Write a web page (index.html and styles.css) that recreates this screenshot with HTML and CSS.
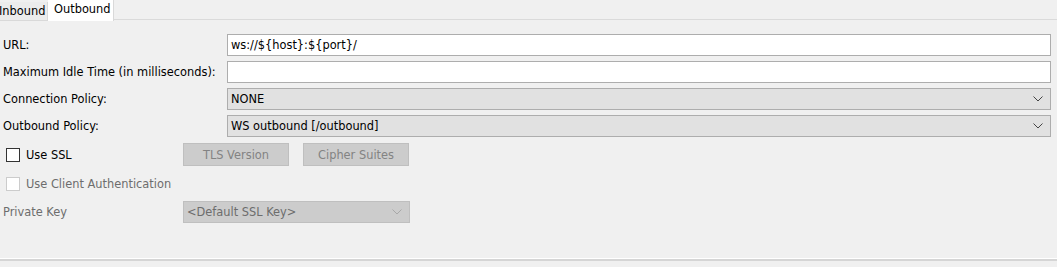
FILE: index.html
```html
<!DOCTYPE html>
<html>
<head>
<meta charset="utf-8">
<link rel="stylesheet" href="styles.css">
</head>
<body>
<div class="tabs">
  <div class="tab">Inbound</div>
  <div class="tab active">Outbound</div>
  <div class="tab-fill"></div>
</div>
<div class="panel">
  <div class="form">
    <label class="lbl">URL:</label>
    <div class="field">ws://${host}:${port}/</div>
    <label class="lbl">Maximum Idle Time (in milliseconds):</label>
    <div class="field"></div>
    <label class="lbl">Connection Policy:</label>
    <div class="combo"><span>NONE</span><svg class="chev" width="10" height="6" viewBox="0 0 10 6"><path d="M0.5 0.5 L5 5 L9.5 0.5" fill="none" stroke="#444" stroke-width="1"/></svg></div>
    <label class="lbl">Outbound Policy:</label>
    <div class="combo"><span>WS outbound [/outbound]</span><svg class="chev" width="10" height="6" viewBox="0 0 10 6"><path d="M0.5 0.5 L5 5 L9.5 0.5" fill="none" stroke="#444" stroke-width="1"/></svg></div>
  </div>
  <div class="ssl">
    <div class="check-row">
      <div class="check"><span class="box"></span><span>Use SSL</span></div>
      <div class="btns">
        <div class="btn">TLS Version</div>
        <div class="btn">Cipher Suites</div>
      </div>
    </div>
    <div class="check disabled"><span class="box"></span><span>Use Client Authentication</span></div>
    <div class="key-row">
      <span class="lbl disabled-text">Private Key</span>
      <div class="combo off"><span>&lt;Default SSL Key&gt;</span><svg class="chev" width="10" height="6" viewBox="0 0 10 6"><path d="M0.5 0.5 L5 5 L9.5 0.5" fill="none" stroke="#a8a8a8" stroke-width="1"/></svg></div>
    </div>
  </div>
</div>
<div class="footer"></div>
</body>
</html>
```

FILE: styles.css
```css
html, body {
  margin: 0;
  padding: 0;
  background: #f0f0f0;
  font-family: "DejaVu Sans", Verdana, sans-serif;
  font-size: 11.4px;
  color: #000;
  width: 1057px;
  height: 267px;
  overflow: hidden;
}
.tabs {
  display: flex;
  height: 21px;
  align-items: flex-end;
}
.tab {
  height: 19px;
  line-height: 19px;
  padding: 0 4px 0 0;
  margin-left: -1px;
  background: #ececec;
  border-right: 1px solid #d9d9d9;
  border-bottom: 1px solid #d9d9d9;
  box-sizing: border-box;
  width: 49px;
  overflow: hidden;
  white-space: nowrap;
  font-size: 11.4px;
}
.tab.active {
  height: 21px;
  width: 66px;
  margin-left: 0;
  background: #fff;
  border-bottom: none;
  border-right: 1px solid #d9d9d9;
  line-height: 18px;
  padding-left: 6px;
}
.tab-fill {
  flex: 1;
  height: 1px;
  margin-bottom: 1px;
  background: #dadada;
}
.panel {
  height: 237px;
}
.form {
  display: grid;
  grid-template-columns: 224px 1fr;
  grid-auto-rows: 22px;
  row-gap: 5px;
  padding: 13px 6px 0 3px;
  align-items: center;
}
.lbl {
  font-size: 11.4px;
  white-space: nowrap;
}
.field, .combo {
  height: 22px;
  box-sizing: border-box;
  border: 1px solid #adadad;
  background: #fff;
  padding: 0 3px;
  display: flex;
  align-items: center;
  font-size: 11.4px;
}
.combo {
  background: #e1e1e1;
  justify-content: space-between;
  padding-right: 7px;
}
.chev { flex: none; }
.ssl {
  padding: 6px 0 0 6px;
}
.check-row {
  display: flex;
  align-items: center;
  height: 23px;
}
.check {
  display: flex;
  align-items: center;
  gap: 6px;
  font-size: 11.4px;
  width: 177px;
  height: 23px;
}
.box {
  width: 14px;
  height: 14px;
  box-sizing: border-box;
  border: 1px solid #333;
  background: #fff;
  flex: none;
}
.check.disabled {
  margin-top: 6px;
  color: #6d6d6d;
}
.check.disabled .box {
  border-color: #cccccc;
}
.btns {
  display: flex;
  gap: 14px;
}
.btn {
  height: 23px;
  box-sizing: border-box;
  width: 106px;
  border: 1px solid #bfbfbf;
  background: #cccccc;
  color: #838383;
  font-size: 11.4px;
  display: flex;
  align-items: center;
  justify-content: center;
}
.key-row {
  display: flex;
  align-items: center;
  margin-top: 6px;
  margin-left: -3px;
}
.key-row .lbl {
  width: 180px;
}
.disabled-text { color: #6d6d6d; }
.combo.off {
  width: 227px;
  background: #cccccc;
  border-color: #bfbfbf;
  color: #6d6d6d;
}
.footer {
  height: 3px;
  border-top: 1px solid #fff;
  background: #d5d5d5;
  box-sizing: border-box;
}
```
